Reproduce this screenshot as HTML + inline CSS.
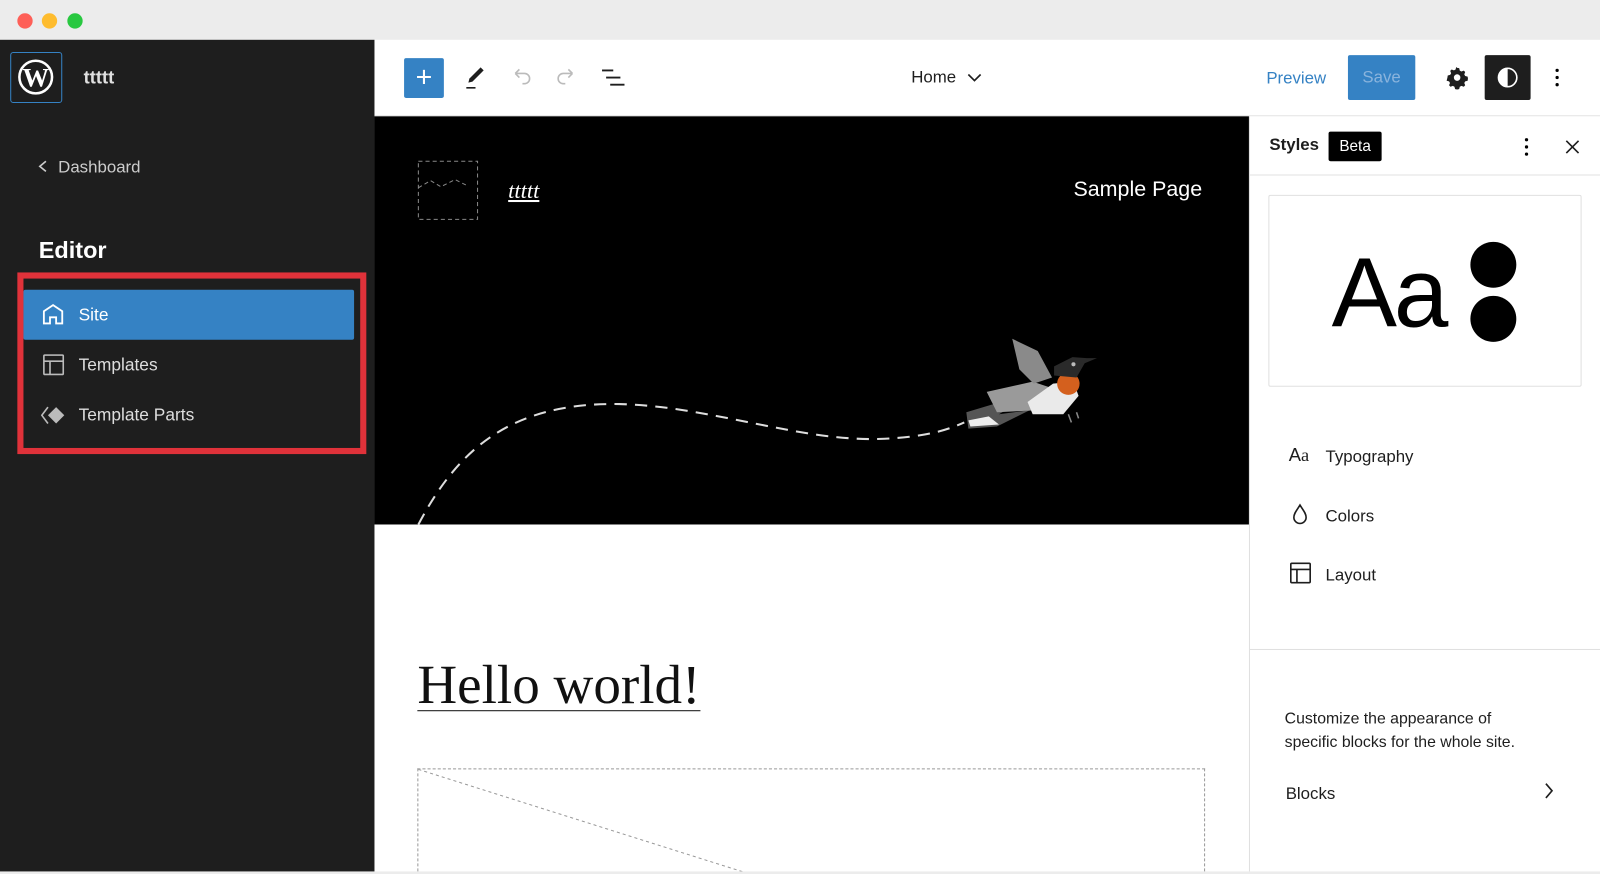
<!DOCTYPE html>
<html><head><meta charset="utf-8"><style>
*{margin:0;padding:0;box-sizing:border-box}
html,body{width:1600px;height:874px;overflow:hidden;background:#ececec;font-family:"Liberation Sans",sans-serif}
#w{position:absolute;left:0;top:0;width:1568px;height:857px;transform:scale(1.0204);transform-origin:0 0;background:#ececec}
.a{position:absolute}
.dot{position:absolute;top:13px;width:15px;height:15px;border-radius:50%}
</style></head><body><div id="w">
<div class="dot" style="left:17px;background:#fe5f57"></div>
<div class="dot" style="left:41px;background:#febc2e"></div>
<div class="dot" style="left:66px;background:#28c840"></div>
<!-- sidebar -->
<div class="a" style="left:0;top:39px;width:367px;height:815px;background:#1e1e1e"></div>
<div class="a" style="left:10px;top:51px;width:51px;height:50px;border:1.5px solid #3582c4;border-radius:3px;background:#1e1e1e">
<svg width="48" height="47" viewBox="0 0 48 47"><circle cx="24" cy="23.5" r="16" fill="none" stroke="#fff" stroke-width="2.5"/><text x="24" y="33" text-anchor="middle" font-family="Liberation Serif" font-size="26" font-weight="bold" fill="#fff">W</text></svg></div>
<div class="a" style="left:82px;top:66px;color:#e0e0e0;font-size:18px;font-weight:bold">ttttt</div>
<div class="a" style="left:36px;top:155px;color:#ccc;font-size:16.5px"><svg width="12" height="14" style="vertical-align:-1px;margin-right:9px"><path d="M9 2L3 7l6 5" fill="none" stroke="#ccc" stroke-width="1.6"/></svg>Dashboard</div>
<div class="a" style="left:38px;top:232px;color:#fff;font-size:23px;font-weight:bold">Editor</div>
<div class="a" style="left:17px;top:267px;width:342px;height:178px;border:6px solid #e0323a"></div>
<div class="a" style="left:23px;top:284px;width:324px;height:49px;background:#3582c4;border-radius:2px"></div>
<svg class="a" style="left:41px;top:297px" width="22" height="22"><path d="M2 20V8l9-6 9 6v12h-6v-6H8v6z" fill="none" stroke="#fff" stroke-width="1.8"/></svg>
<div class="a" style="left:77px;top:299px;color:#fff;font-size:17px">Site</div>
<svg class="a" style="left:42px;top:347px" width="21" height="21"><rect x="1" y="1" width="19" height="19" rx="1" fill="none" stroke="#bbb" stroke-width="1.6"/><path d="M1 7h19M7 7v13" stroke="#bbb" stroke-width="1.6"/></svg>
<div class="a" style="left:77px;top:348px;color:#ddd;font-size:17px">Templates</div>
<svg class="a" style="left:40px;top:397px" width="26" height="20"><path d="M7 2L1 10l6 8" fill="none" stroke="#bbb" stroke-width="1.6"/><path d="M15 2l8 8-8 8-8-8z" fill="#bbb"/></svg>
<div class="a" style="left:77px;top:397px;color:#ddd;font-size:17px">Template Parts</div>
<!-- toolbar -->
<div class="a" style="left:367px;top:39px;width:1201px;height:75px;background:#fff;border-bottom:1px solid #e0e0e0"></div>
<div class="a" style="left:396px;top:57px;width:39px;height:39px;background:#3582c4;border-radius:2px;color:#fff;font-size:28px;text-align:center;line-height:38px">+</div>
<svg class="a" style="left:455px;top:63px" width="24" height="26"><path d="M4 18l1-4L16 3l3 3L8 17z" fill="#1e1e1e"/><path d="M2 23h9" stroke="#1e1e1e" stroke-width="1.6"/></svg>
<svg class="a" style="left:499px;top:64px" width="24" height="24"><path d="M6 8h9a5 5 0 010 10h-2M6 8l4-4M6 8l4 4" fill="none" stroke="#bbb" stroke-width="1.6"/></svg>
<svg class="a" style="left:543px;top:64px" width="24" height="24"><path d="M18 8H9a5 5 0 000 10h2M18 8l-4-4M18 8l-4 4" fill="none" stroke="#bbb" stroke-width="1.6"/></svg>
<svg class="a" style="left:587px;top:64px" width="26" height="24"><path d="M3 5h11M7 12h14M11 19h14" stroke="#1e1e1e" stroke-width="1.8"/></svg>
<div class="a" style="left:893px;top:67px;font-size:16.5px;color:#1e1e1e">Home <svg width="14" height="10" style="margin-left:6px"><path d="M1 2l6 6 6-6" fill="none" stroke="#1e1e1e" stroke-width="1.6"/></svg></div>
<div class="a" style="left:1241px;top:68px;font-size:16.5px;color:#3582c4">Preview</div>
<div class="a" style="left:1321px;top:54px;width:66px;height:44px;background:#3582c4;border-radius:2px;color:#8ab4dd;font-size:16.5px;text-align:center;line-height:44px">Save</div>
<svg class="a" style="left:1416px;top:64px" width="24" height="24" viewBox="0 0 24 24"><path d="M12 2.5l2 .3.6 2.4 1.6.9 2.3-.9 1.4 1.4-.9 2.3.9 1.6 2.4.6.3 2-.3 2-2.4.6-.9 1.6.9 2.3-1.4 1.4-2.3-.9-1.6.9-.6 2.4-2 .3-2-.3-.6-2.4-1.6-.9-2.3.9-1.4-1.4.9-2.3-.9-1.6-2.4-.6L2.5 12l.3-2 2.4-.6.9-1.6-.9-2.3 1.4-1.4 2.3.9 1.6-.9.6-2.4z" fill="#1e1e1e"/><circle cx="12" cy="12" r="3.2" fill="#fff"/></svg>
<div class="a" style="left:1455px;top:54px;width:45px;height:44px;background:#1e1e1e;border-radius:2px"><svg width="45" height="44"><circle cx="22.5" cy="22" r="9" fill="none" stroke="#fff" stroke-width="1.6"/><path d="M22.5 13a9 9 0 000 18z" fill="#fff"/></svg></div>
<svg class="a" style="left:1520px;top:64px" width="12" height="24"><circle cx="6" cy="5" r="1.6"/><circle cx="6" cy="12" r="1.6"/><circle cx="6" cy="19" r="1.6"/></svg>
<!-- canvas -->
<div class="a" style="left:367px;top:114px;width:857px;height:740px;background:#fff"></div>
<div class="a" style="left:367px;top:114px;width:857px;height:400px;background:#000;overflow:hidden">
<svg width="857" height="400"><rect x="43" y="44" width="58" height="57" fill="none" stroke="#888" stroke-dasharray="4 3"/><path d="M43 70l12-7 10 6 14-7 12 6" fill="none" stroke="#888" stroke-dasharray="4 3"/>
<path d="M43 400C80 330 130 280 240 282 330 284 420 320 500 316 540 314 560 308 578 300" fill="none" stroke="#ddd" stroke-width="2" stroke-dasharray="12 8"/>
<!-- bird -->
<path d="M580 290l40-12 12 2-20 12 30-4-32 16-28 2z" fill="#555"/>
<path d="M582 298l20-4 10 8-28 2z" fill="#eee"/>
<path d="M600 270l45-10 30 10-25 18-40 2z" fill="#9a9a9a"/>
<path d="M625 218l25 12 14 26-18 6-14-14z" fill="#8a8a8a"/>
<path d="M640 280l25-18 20-2 5 14-15 18-30 0z" fill="#eaeaea"/>
<circle cx="680" cy="262" r="11" fill="#d4601e"/>
<path d="M666 245l18-9 14 1 10 0-12 5-8 14-22-2z" fill="#2a2a2a"/>
<circle cx="685" cy="243" r="2" fill="#bbb"/>
<path d="M680 292l3 8M688 290l2 6" stroke="#888" stroke-width="1.5"/></svg></div>
<div class="a" style="left:498px;top:174px;color:#fff;font-size:22px;font-style:italic;text-decoration:underline;font-family:'Liberation Serif',serif">ttttt</div>
<div class="a" style="left:1052px;top:174px;color:#fff;font-size:21px">Sample Page</div>
<div class="a" style="left:409px;top:640px;color:#111;font-size:54px;font-family:'Liberation Serif',serif;text-decoration:underline;text-decoration-thickness:1px;text-underline-offset:7px">Hello world!</div>
<div class="a" style="left:409px;top:753px;width:772px;height:101px;border:1px dashed #999;border-bottom:none;overflow:hidden"><svg width="772" height="101"><path d="M0 0L320 101" stroke="#999" stroke-dasharray="3 3"/></svg></div>
<!-- right panel -->
<div class="a" style="left:1224px;top:114px;width:344px;height:740px;background:#fff;border-left:1px solid #e0e0e0"></div>
<div class="a" style="left:1225px;top:171px;width:343px;height:1px;background:#e0e0e0"></div>
<div class="a" style="left:1244px;top:133px;font-size:16.5px;font-weight:bold;color:#1e1e1e">Styles</div>
<div class="a" style="left:1302px;top:129px;width:52px;height:29px;background:#000;color:#fff;font-size:15px;text-align:center;line-height:29px;border-radius:2px">Beta</div>
<svg class="a" style="left:1490px;top:132px" width="12" height="24"><circle cx="6" cy="5" r="1.6"/><circle cx="6" cy="12" r="1.6"/><circle cx="6" cy="19" r="1.6"/></svg>
<svg class="a" style="left:1532px;top:135px" width="18" height="18"><path d="M3 3l12 12M15 3L3 15" stroke="#1e1e1e" stroke-width="1.6"/></svg>
<div class="a" style="left:1243px;top:191px;width:307px;height:188px;border:1px solid #e0e0e0;border-radius:2px"></div>
<div class="a" style="left:1305px;top:238px;font-size:96px;color:#000;letter-spacing:-3px;line-height:100px">Aa</div>
<div class="a" style="left:1441px;top:237px;width:45px;height:45px;border-radius:50%;background:#000"></div>
<div class="a" style="left:1441px;top:290px;width:45px;height:45px;border-radius:50%;background:#000"></div>
<div class="a" style="left:1263px;top:436px;font-size:18px;color:#1e1e1e">A<span style="font-family:'Liberation Serif',serif">a</span></div>
<div class="a" style="left:1299px;top:439px;font-size:16.5px;color:#1e1e1e">Typography</div>
<svg class="a" style="left:1264px;top:493px" width="20" height="22"><path d="M10 2C7 7 4 10 4 14a6 6 0 0012 0c0-4-3-7-6-12z" fill="none" stroke="#1e1e1e" stroke-width="1.6"/></svg>
<div class="a" style="left:1299px;top:497px;font-size:16.5px;color:#1e1e1e">Colors</div>
<svg class="a" style="left:1264px;top:551px" width="21" height="21"><rect x="1" y="1" width="19" height="19" rx="1" fill="none" stroke="#1e1e1e" stroke-width="1.6"/><path d="M1 7h19M7 7v13" stroke="#1e1e1e" stroke-width="1.6"/></svg>
<div class="a" style="left:1299px;top:555px;font-size:16.5px;color:#1e1e1e">Layout</div>
<div class="a" style="left:1225px;top:636px;width:343px;height:1px;background:#e0e0e0"></div>
<div class="a" style="left:1259px;top:693px;font-size:15.5px;color:#1e1e1e;line-height:23px">Customize the appearance of<br>specific blocks for the whole site.</div>
<div class="a" style="left:1260px;top:769px;font-size:16.5px;color:#1e1e1e">Blocks</div>
<svg class="a" style="left:1512px;top:766px" width="12" height="18"><path d="M3 2l6 7-6 7" fill="none" stroke="#1e1e1e" stroke-width="1.6"/></svg>
</div></body></html>
